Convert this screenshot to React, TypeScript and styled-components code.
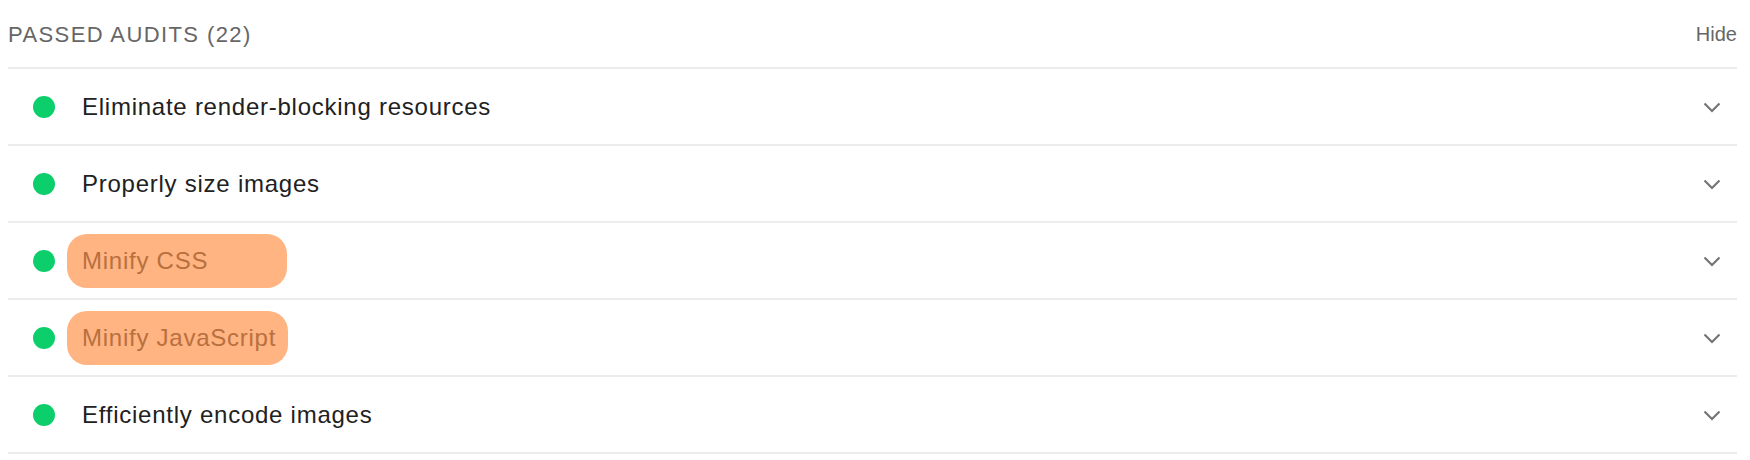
import React from 'react';
import styled, { createGlobalStyle } from "styled-components";

type AuditType = {
    title: string
    highlighted?: boolean
}

const audits: AuditType[] = [
    { title: "Eliminate render-blocking resources" },
    { title: "Properly size images" },
    { title: "Minify CSS", highlighted: true },
    { title: "Minify JavaScript", highlighted: true },
    { title: "Efficiently encode images" },
];

const Chevron = () => (
    <svg width="18" height="11" viewBox="0 0 18 11">
        <polyline points="1.5,1.5 9,9 16.5,1.5" fill="none" stroke="#757575" strokeWidth="2.2" />
    </svg>
);

const AuditRow = (props: AuditType) => {
    return (
        <Row>
            <Dot />
            <Title highlighted={props.highlighted}>{props.title}</Title>
            <Toggle><Chevron /></Toggle>
        </Row>
    );
};

export default function App() {
    return (
        <>
            <GlobalStyle />
            <Section>
                <Header>
                    <Heading>Passed audits <Count>(22)</Count></Heading>
                    <HideLink>Hide</HideLink>
                </Header>
                {audits.map(a => <AuditRow key={a.title} {...a} />)}
            </Section>
        </>
    );
}

const GlobalStyle = createGlobalStyle`
  body {
    margin: 0;
    background: #fff;
    font-family: "Liberation Sans", Arial, sans-serif;
  }
`

const Section = styled.div`
  padding: 0 13px 0 8px;
`

const Header = styled.div`
  display: flex;
  align-items: center;
  justify-content: space-between;
  height: 67px;
  border-bottom: 2px solid #ececec;
`

const Heading = styled.div`
  font-size: 22px;
  letter-spacing: 1.4px;
  text-transform: uppercase;
  color: #666666;
  padding-top: 2px;
`

const Count = styled.span`
  text-transform: none;
`

const HideLink = styled.a`
  font-size: 20px;
  color: #666666;
  padding-top: 2px;
`

const Row = styled.div`
  display: flex;
  align-items: center;
  height: 75px;
  border-bottom: 2px solid #ececec;
`

const Dot = styled.span`
  width: 22px;
  height: 22px;
  border-radius: 50%;
  background: #0cce6b;
  margin-left: 25px;
  flex-shrink: 0;
`

const Title = styled.span<{ highlighted?: boolean }>`
  display: flex;
  align-items: center;
  box-sizing: border-box;
  height: 54px;
  min-width: 220px;
  margin-left: 12px;
  padding: 0 12px 0 15px;
  border-radius: 20px;
  font-size: 24px;
  letter-spacing: 0.75px;
  color: ${p => p.highlighted ? "#b8703f" : "#212121"};
  background: ${p => p.highlighted ? "#ffb482" : "transparent"};
`

const Toggle = styled.span`
  margin-left: auto;
  margin-right: 16px;
  display: flex;
  align-items: center;
  padding-top: 2px;
`
